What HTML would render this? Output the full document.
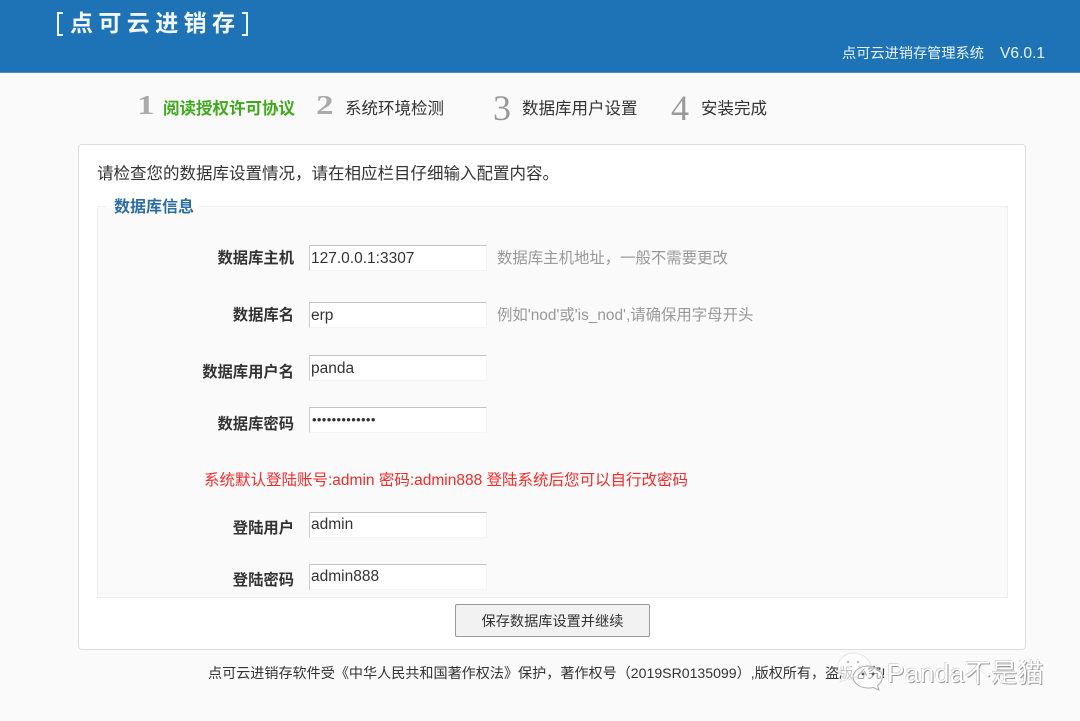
<!DOCTYPE html>
<html lang="zh"><head><meta charset="utf-8"><title>点可云进销存</title>
<style>
*{box-sizing:border-box}
html,body{margin:0;padding:0}
body{position:relative;width:1080px;height:721px;overflow:hidden;background:#fafafa;font-family:"Liberation Sans","Noto Sans CJK SC",sans-serif;color:#333}
#w{position:absolute;left:0;top:0;width:1080px;height:721px;filter:blur(.35px)}
.a{position:absolute;white-space:nowrap;line-height:1}
.num{font-family:"Liberation Serif",serif;color:#999}
.num2{font-family:"Liberation Serif",serif;font-weight:bold;color:#aaa;font-size:27px;transform:scaleX(1.3);transform-origin:left top}
.step{font-size:16.5px;color:#333}
.lb{font-size:15.3px;font-weight:bold;color:#333;right:786px}
.ip{position:absolute;left:309px;width:178px;height:26px;background:#fff;border-top:1px solid #c4c4c4;border-left:1px solid #ccc;border-right:1px solid #f4f4f4;border-bottom:1px solid #f4f4f4;font-size:15.5px;line-height:25px;padding-left:1px;color:#333;white-space:nowrap}
.hint{font-size:15.4px;color:#999}
</style></head><body><div id="w">
<div class="a" style="left:0;top:0;width:1080px;height:73px;background:#1e73b6;border-bottom:1px solid #4b90c6"></div>
<div class="a" style="left:70px;top:12px;font-size:23px;font-weight:bold;color:#f2f6fa;letter-spacing:5.4px">点可云进销存</div>
<div class="a" style="left:57px;top:12px;width:6px;height:24px;border:2px solid #eef3f8;border-right:0"></div>
<div class="a" style="left:242px;top:12px;width:6px;height:24px;border:2px solid #eef3f8;border-left:0"></div>
<div class="a" style="left:842px;top:47px;font-size:14.2px;color:#eaf2f8">点可云进销存管理系统</div>
<div class="a" style="left:1000px;top:46px;font-size:15.6px;color:#eaf2f8">V6.0.1</div>

<div class="a num2" style="left:137px;top:92px">1</div>
<div class="a step" style="left:163px;top:101px;color:#3fa91d;font-weight:bold">阅读授权许可协议</div>
<div class="a num2" style="left:316px;top:92px">2</div>
<div class="a step" style="left:345px;top:101px">系统环境检测</div>
<div class="a num" style="left:493px;top:90px;font-size:36px">3</div>
<div class="a step" style="left:522px;top:101px">数据库用户设置</div>
<div class="a num" style="left:671px;top:90px;font-size:36px">4</div>
<div class="a step" style="left:701px;top:101px">安装完成</div>

<div class="a" style="left:78px;top:144px;width:948px;height:506px;background:#fff;border:1px solid #ddd;border-radius:4px"></div>
<div class="a" style="left:97px;top:166px;font-size:16.5px">请检查您的数据库设置情况，请在相应栏目仔细输入配置内容。</div>
<div class="a" style="left:97px;top:206px;width:911px;height:392px;background:#fafafa;border:1px solid #eee"></div>
<div class="a" style="left:106px;top:200px;width:93px;height:8px;background:#fff"></div>
<div class="a" style="left:114px;top:200px;font-size:16px;font-weight:bold;color:#2c6ea4">数据库信息</div>

<div class="a lb" style="top:251px">数据库主机</div>
<div class="ip" style="top:245px">127.0.0.1:3307</div>
<div class="a hint" style="left:497px;top:251px">数据库主机地址，一般不需要更改</div>
<div class="a lb" style="top:308px">数据库名</div>
<div class="ip" style="top:302px">erp</div>
<div class="a hint" style="left:497px;top:308px">例如'nod'或'is_nod',请确保用字母开头</div>
<div class="a lb" style="top:365px">数据库用户名</div>
<div class="ip" style="top:355px;line-height:25px">panda</div>
<div class="a lb" style="top:417px">数据库密码</div>
<div class="ip" style="top:407px;font-size:13px;letter-spacing:.35px;line-height:24px;padding-left:2px">•••••••••••••</div>
<div class="a" style="left:204px;top:473px;font-size:15.5px;color:#f52a2a">系统默认登陆账号:admin 密码:admin888 登陆系统后您可以自行改密码</div>
<div class="a lb" style="top:521px">登陆用户</div>
<div class="ip" style="top:512px;line-height:23px">admin</div>
<div class="a lb" style="top:573px">登陆密码</div>
<div class="ip" style="top:564px;line-height:23px">admin888</div>

<div class="a" style="left:455px;top:604px;width:195px;height:33px;background:#f2f2f2;border:1px solid #999;border-radius:2px;font-size:14.2px;line-height:33px;padding-top:1px;text-align:center;color:#333">保存数据库设置并继续</div>

<div class="a" style="left:208px;top:666px;font-size:14.1px;color:#333">点可云进销存软件受《中华人民共和国著作权法》保护，著作权号（2019SR0135099）,版权所有，盗版必究!</div>

<svg class="a" style="left:836px;top:651px" width="56" height="42" viewBox="0 0 56 42">
<path d="M17 2C9 2 2 8 2 16c0 4 2 7 5 10l-3 5 8-3c2 .6 3 .8 5 .8 1 0 3 0 4-.2-1-7 6-13 14-13C34 8 26 2 17 2z" fill="#fff" fill-opacity=".72" stroke="#e6e6e6"/>
<path d="M32 15c-8 0-15 5-15 11s7 11 15 11c2 0 4 0 5-.6l6 2.600-1.500-4.500c3-2 5-5 5-8.500 0-6-7-11-14.500-11z" fill="#fff" fill-opacity=".55" stroke="#aaa"/>
<circle cx="27" cy="23" r="1.400" fill="#555"/><circle cx="37" cy="23" r="1.400" fill="#555"/>
<circle cx="12" cy="11" r="1.200" fill="#bbb"/><circle cx="22" cy="11" r="1.200" fill="#bbb"/>
</svg>
<div class="a" style="left:887px;top:660px;font-size:26px;color:#fff;letter-spacing:.5px;text-shadow:1px 1px 0 #999,-.5px -.5px 0 #bbb">Panda不是猫</div>
</div></body></html>
